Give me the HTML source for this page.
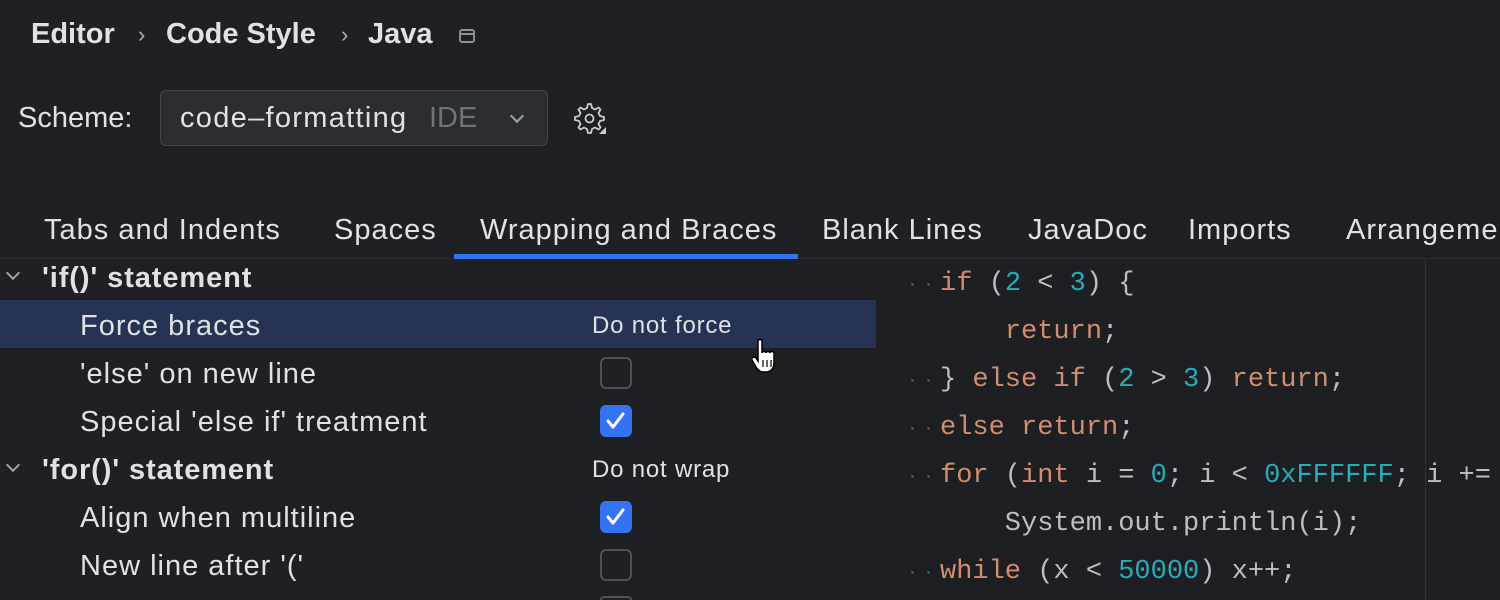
<!DOCTYPE html>
<html><head><meta charset="utf-8"><style>
*{margin:0;padding:0;box-sizing:border-box}
html{overflow:hidden;width:1500px;height:600px}
body{width:1500px;height:600px;overflow:hidden;background:#1f2023;font-family:"Liberation Sans",sans-serif;color:#dfe1e5;position:relative}
.a{position:absolute;white-space:nowrap}
.crumb{font-size:29px;font-weight:bold;top:18px;color:#dfe1e5}
.sep{font-size:22px;top:22px;color:#b0b3b8}
.tab{font-size:29px;letter-spacing:1px;top:214px;color:#dfe1e5}
.lbl{font-size:29px;letter-spacing:1px;line-height:48px;height:48px}
.val{font-size:24px;letter-spacing:0.8px;line-height:48px}
.cb{position:absolute;width:32px;height:32px;border-radius:6px;border:2px solid #4e5157;left:600px}
.cb.on{background:#3574f0;border-color:#3574f0}
.chev{position:absolute;left:8px;width:10px;height:10px;border-right:2px solid #9da0a8;border-bottom:2px solid #9da0a8;transform:rotate(45deg)}
.code{position:absolute;left:905px;top:259px;width:595px;height:341px;background:#1e1f22;font-family:"Liberation Mono",monospace;font-size:27px;overflow:hidden}
.code div{position:absolute;left:35px;height:48px;line-height:48px;white-space:pre;color:#bcbec4}
.k{color:#cf8e6d}.n{color:#2aacb8}
.dot{position:absolute;width:3px;height:3px;background:#4a4c50;border-radius:50%}
</style></head><body>
<div class="a crumb" style="left:31px">Editor</div>
<div class="a sep" style="left:138px">›</div>
<div class="a crumb" style="left:166px">Code Style</div>
<div class="a sep" style="left:341px">›</div>
<div class="a crumb" style="left:368px">Java</div>
<div class="a" style="left:459px;top:29px;width:16px;height:14px;border:2px solid #8c8f96;border-radius:3px"></div>
<div class="a" style="left:459px;top:33px;width:16px;height:2px;background:#8c8f96"></div>

<div class="a" style="left:18px;top:102px;font-size:29px">Scheme:</div>
<div class="a" style="left:160px;top:90px;width:388px;height:56px;border:1.5px solid #43454a;border-radius:6px;background:#2b2d30"></div>
<div class="a" style="left:180px;top:102px;font-size:29px;letter-spacing:1.3px">code–formatting</div>
<div class="a" style="left:429px;top:102px;font-size:29px;color:#6f737a">IDE</div>
<div class="a" style="left:512px;top:111px;width:10px;height:10px;border-right:2px solid #9da0a8;border-bottom:2px solid #9da0a8;transform:rotate(45deg)"></div>
<svg class="a" style="left:572px;top:102px" width="36" height="34" viewBox="0 0 36 34"><path d="M16 2l3 0 1 4 3 1.5 3.5-2 2 2-2 3.5 1.5 3 4 1v3l-4 1-1.5 3 2 3.5-2 2-3.5-2-3 1.5-1 4h-3l-1-4-3-1.5-3.5 2-2-2 2-3.5-1.5-3-4-1v-3l4-1 1.5-3-2-3.5 2-2 3.5 2 3-1.5z" fill="none" stroke="#c9ccd1" stroke-width="1.8" stroke-linejoin="round"/><circle cx="17.5" cy="16.5" r="4" fill="none" stroke="#c9ccd1" stroke-width="1.8"/><path d="M34 25v7h-7z" fill="#c9ccd1"/></svg>

<div class="a tab" style="left:44px">Tabs and Indents</div>
<div class="a tab" style="left:334px">Spaces</div>
<div class="a tab" style="left:480px">Wrapping and Braces</div>
<div class="a tab" style="left:822px">Blank Lines</div>
<div class="a tab" style="left:1028px">JavaDoc</div>
<div class="a tab" style="left:1188px">Imports</div>
<div class="a tab" style="left:1346px">Arrangement</div>
<div class="a" style="left:0;top:258px;width:1500px;height:1px;background:#2b2d30"></div>
<div class="a" style="left:454px;top:254px;width:344px;height:5px;background:#3574f0"></div>

<div class="a" style="left:0;top:300px;width:876px;height:48px;background:#263354"></div>
<div class="chev" style="top:268px"></div>
<div class="a lbl" style="left:42px;top:254px;font-weight:bold;letter-spacing:0.9px">'if()' statement</div>
<div class="a lbl" style="left:80px;top:302px">Force braces</div>
<div class="a val" style="left:592px;top:302px">Do not force</div>
<div class="a lbl" style="left:80px;top:350px">'else' on new line</div>
<div class="cb" style="top:357px"></div>
<div class="a lbl" style="left:80px;top:398px">Special 'else if' treatment</div>
<div class="cb on" style="top:405px"><svg width="28" height="28" viewBox="0 0 28 28"><path d="M6 14l5 6 10-13" fill="none" stroke="#fff" stroke-width="3" stroke-linecap="round" stroke-linejoin="round"/></svg></div>
<div class="chev" style="top:460px"></div>
<div class="a lbl" style="left:42px;top:446px;font-weight:bold;letter-spacing:0.9px">'for()' statement</div>
<div class="a val" style="left:592px;top:446px">Do not wrap</div>
<div class="a lbl" style="left:80px;top:494px">Align when multiline</div>
<div class="cb on" style="top:501px"><svg width="28" height="28" viewBox="0 0 28 28"><path d="M6 14l5 6 10-13" fill="none" stroke="#fff" stroke-width="3" stroke-linecap="round" stroke-linejoin="round"/></svg></div>
<div class="a lbl" style="left:80px;top:542px">New line after '('</div>
<div class="cb" style="top:549px"></div>
<div class="a" style="left:600px;top:596px;width:32px;height:4px;border:2px solid #4e5157;border-bottom:none;border-radius:6px 6px 0 0"></div>
<svg class="a" style="left:752px;top:338px" width="30" height="36" viewBox="0 0 30 36"><path d="M6 3c0-2 4-2 4 0v12c0-2 4-2 4 0 0-2 4-2 4 0 0-2 4-2 4 0v10c0 5-3 9-8 9h-3c-3 0-5-2-7-5l-4-7c-1-2 2-4 4-2l2 3z" fill="#fff" stroke="#000" stroke-width="1.5"/><path d="M11 22v7M15 22v7M19 22v7" stroke="#000" stroke-width="1.2"/></svg>

<div class="code">
<div class="a" style="left:520px;top:0;width:1px;height:341px;background:#2f3135"></div>
<div style="top:1px"><span class="k">if</span> (<span class="n">2</span> &lt; <span class="n">3</span>) {</div>
<div style="top:49px">    <span class="k">return</span>;</div>
<div style="top:97px">} <span class="k">else if</span> (<span class="n">2</span> &gt; <span class="n">3</span>) <span class="k">return</span>;</div>
<div style="top:145px"><span class="k">else return</span>;</div>
<div style="top:193px"><span class="k">for</span> (<span class="k">int</span> i = <span class="n">0</span>; i &lt; <span class="n">0xFFFFFF</span>; i +=</div>
<div style="top:241px">    System.out.println(i);</div>
<div style="top:289px"><span class="k">while</span> (x &lt; <span class="n">50000</span>) x++;</div>
<span class="dot" style="left:6px;top:24px"></span><span class="dot" style="left:22px;top:24px"></span>
<span class="dot" style="left:6px;top:120px"></span><span class="dot" style="left:22px;top:120px"></span>
<span class="dot" style="left:6px;top:168px"></span><span class="dot" style="left:22px;top:168px"></span>
<span class="dot" style="left:6px;top:216px"></span><span class="dot" style="left:22px;top:216px"></span>
<span class="dot" style="left:6px;top:312px"></span><span class="dot" style="left:22px;top:312px"></span>
</div>
</body></html>
